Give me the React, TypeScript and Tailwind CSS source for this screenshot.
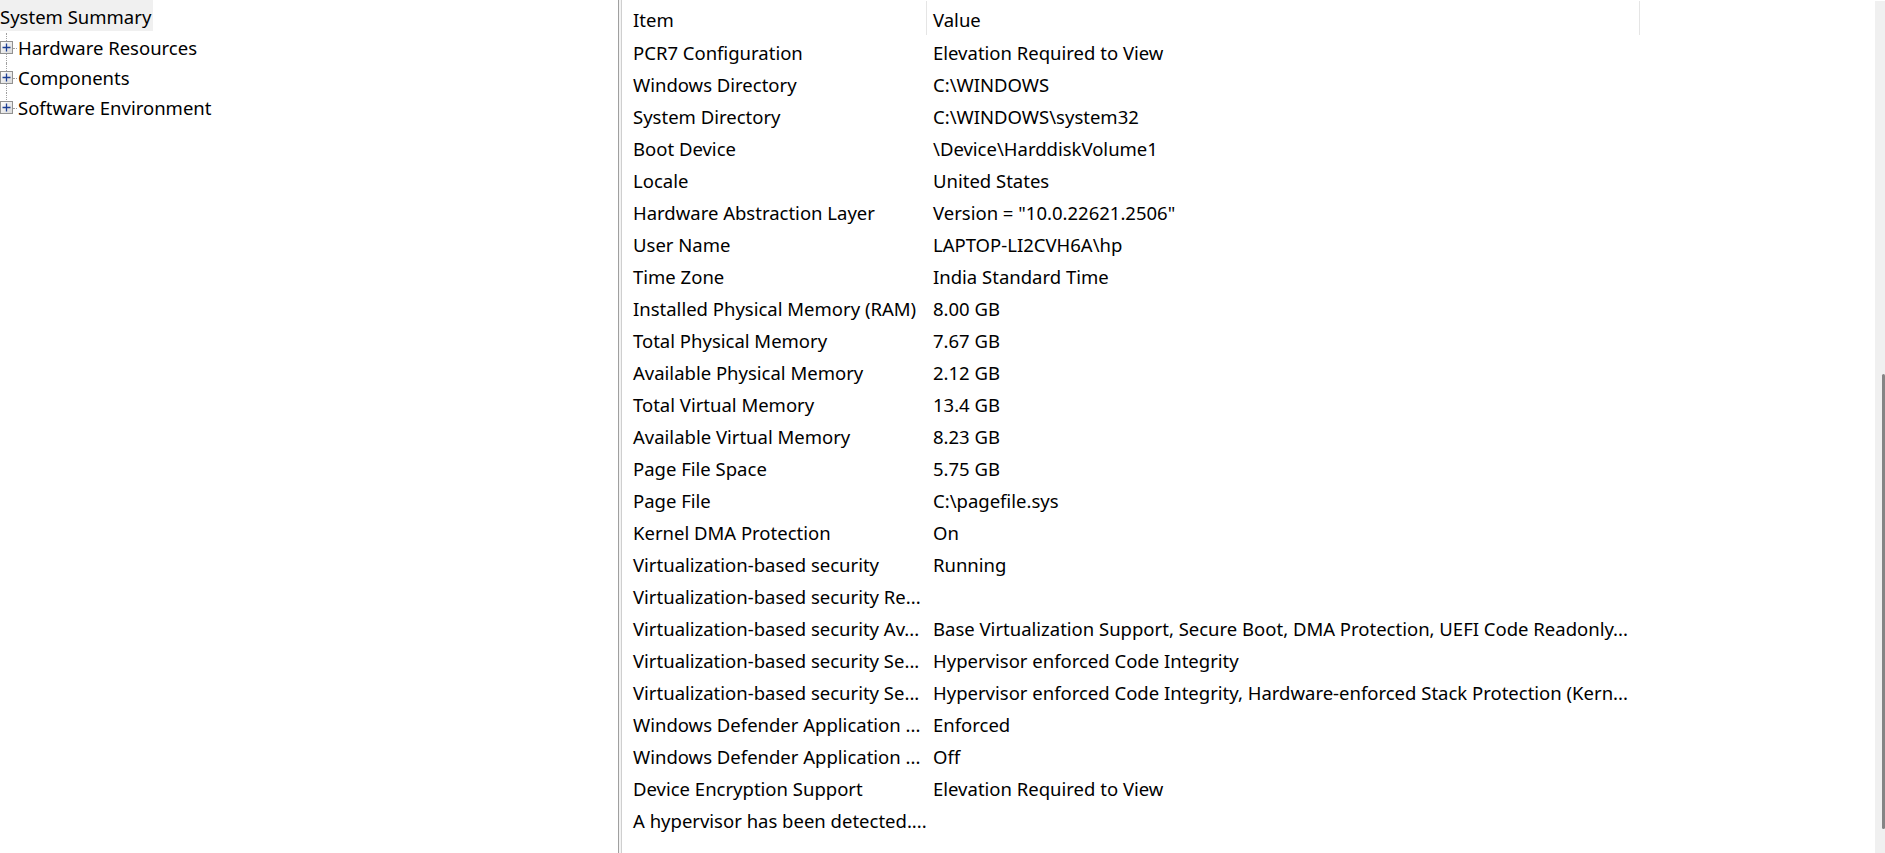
const treeItems = ["Hardware Resources", "Components", "Software Environment"];

const rows: [string, string][] = [
  ["PCR7 Configuration", "Elevation Required to View"],
  ["Windows Directory", "C:\\WINDOWS"],
  ["System Directory", "C:\\WINDOWS\\system32"],
  ["Boot Device", "\\Device\\HarddiskVolume1"],
  ["Locale", "United States"],
  ["Hardware Abstraction Layer", 'Version = "10.0.22621.2506"'],
  ["User Name", "LAPTOP-LI2CVH6A\\hp"],
  ["Time Zone", "India Standard Time"],
  ["Installed Physical Memory (RAM)", "8.00 GB"],
  ["Total Physical Memory", "7.67 GB"],
  ["Available Physical Memory", "2.12 GB"],
  ["Total Virtual Memory", "13.4 GB"],
  ["Available Virtual Memory", "8.23 GB"],
  ["Page File Space", "5.75 GB"],
  ["Page File", "C:\\pagefile.sys"],
  ["Kernel DMA Protection", "On"],
  ["Virtualization-based security", "Running"],
  ["Virtualization-based security Re...", ""],
  ["Virtualization-based security Av...", "Base Virtualization Support, Secure Boot, DMA Protection, UEFI Code Readonly..."],
  ["Virtualization-based security Se...", "Hypervisor enforced Code Integrity"],
  ["Virtualization-based security Se...", "Hypervisor enforced Code Integrity, Hardware-enforced Stack Protection (Kern..."],
  ["Windows Defender Application ...", "Enforced"],
  ["Windows Defender Application ...", "Off"],
  ["Device Encryption Support", "Elevation Required to View"],
  ["A hypervisor has been detected....", ""],
];

function PlusBox() {
  return (
    <svg width="13" height="13" viewBox="0 0 13 13" className="shrink-0">
      <defs>
        <linearGradient id="pb" x1="0" y1="0" x2="1" y2="1">
          <stop offset="0" stopColor="#ffffff" />
          <stop offset="1" stopColor="#d8d8d8" />
        </linearGradient>
      </defs>
      <rect x="0.5" y="0.5" width="12" height="12" fill="url(#pb)" stroke="#919191" />
      <path d="M2.5 6.5h8M6.5 2.5v8" stroke="#1c3f94" strokeWidth="1.3" />
    </svg>
  );
}

function TreeRow({ label, last }: { label: string; last: boolean }) {
  return (
    <div className="flex h-[30px] items-center">
      <div className="relative h-full w-[13px] shrink-0">
        <div
          className={`absolute left-[6px] top-0 border-l border-dotted border-[#a0a0a0] ${
            last ? "h-[15px]" : "h-full"
          }`}
        />
        <div className="absolute left-0 top-[8px]">
          <PlusBox />
        </div>
      </div>
      <div className="w-[4px] border-t border-dotted border-[#a0a0a0]" />
      <span className="pl-[1px] whitespace-nowrap">{label}</span>
    </div>
  );
}

export default function App() {
  return (
    <div
      className="flex h-[853px] w-[1885px] overflow-hidden bg-white text-[18.5px] text-black"
      style={{ fontFamily: '"Noto Sans", "Open Sans", sans-serif' }}
    >
      {/* tree pane */}
      <div className="w-[618px] shrink-0">
        <div className="flex h-[33px] items-start">
          <span className="h-[31px] bg-[#f0f0f0] pr-[2px] pt-[3px] leading-[28px] whitespace-nowrap">
            System Summary
          </span>
        </div>
        {treeItems.map((t, i) => (
          <TreeRow key={t} label={t} last={i === treeItems.length - 1} />
        ))}
      </div>

      {/* splitter */}
      <div className="w-[4px] shrink-0 border-l border-r border-l-[#a0a0a0] border-r-[#cfcfcf] bg-[#f3f3f3]" />

      {/* list pane */}
      <div className="flex min-w-0 flex-1 flex-col">
        <div className="flex h-[37px] shrink-0 items-center pt-[3px]">
          <div className="w-[304px] shrink-0 pl-[11px]">Item</div>
          <div className="h-[34px] w-px shrink-0 self-start -mt-[2px] bg-[#e5e5e5]" />
          <div className="w-[712px] shrink-0 pl-[6px]">Value</div>
          <div className="h-[34px] w-px shrink-0 self-start -mt-[2px] bg-[#e5e5e5]" />
        </div>
        {rows.map(([item, value], i) => (
          <div key={i} className="flex h-[32px] shrink-0 items-center whitespace-nowrap">
            <div className="w-[305px] shrink-0 overflow-hidden pl-[11px]">{item}</div>
            <div className="w-[712px] shrink-0 overflow-hidden pl-[6px]">{value}</div>
          </div>
        ))}
      </div>

      {/* scrollbar */}
      <div className="relative mt-[1px] w-[10px] shrink-0 bg-[#f0f0f0]">
        <div className="absolute left-[7px] top-[373px] h-[455px] w-[3px] rounded-full bg-[#858585]" />
      </div>
    </div>
  );
}
